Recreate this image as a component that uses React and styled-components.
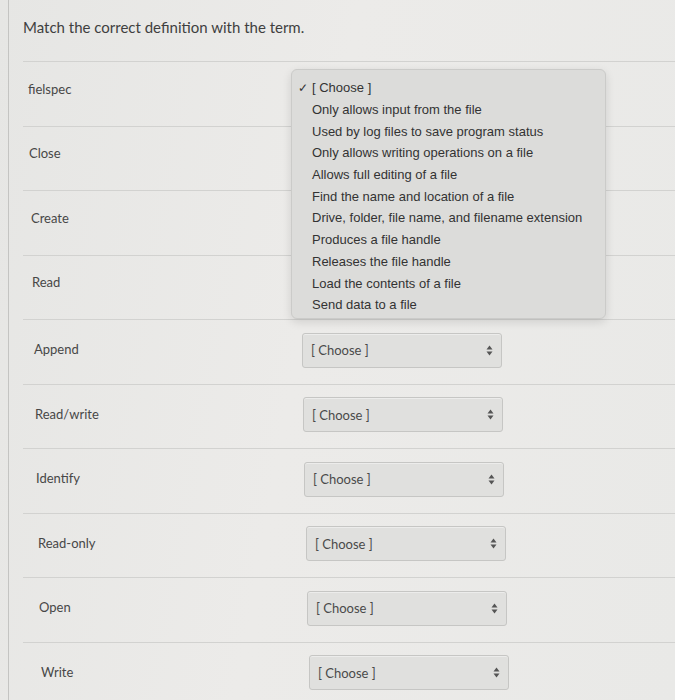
import React from "react";
import styled, { createGlobalStyle } from "styled-components";

const GlobalStyle = createGlobalStyle`
  html, body {
    margin: 0;
    padding: 0;
    background: #e8e8e6;
  }
  body {
    font-family: Lato, "Open Sans", sans-serif;
    color: #474747;
  }
`;

const Page = styled.div`
  position: relative;
  width: 675px;
  height: 700px;
  overflow: hidden;
  background: linear-gradient(100deg, #e6e6e4 0%, #ecebe9 45%, #e9e9e7 100%);
`;

const Question = styled.div`
  margin-left: 8px;
  border-left: 1px solid #c4c4c2;
  height: 100%;
  padding-left: 14px;
  box-sizing: border-box;
`;

const Title = styled.div`
  padding-top: 18px;
  height: 61px;
  box-sizing: border-box;
  font-size: 15px;
  color: #3f3f3f;
`;

const Rows = styled.div`
  position: relative;
`;

const Row = styled.div`
  display: grid;
  grid-template-columns: 268px 200px;
  align-items: center;
  height: 64.5px;
  border-top: 1px solid #d2d2d0;
  box-sizing: border-box;
  padding-left: ${(p) => p.$indent}px;
`;

const Label = styled.div`
  font-size: 13px;
  color: #474747;
  margin-top: ${(p) => p.$lift}px;
`;

const Select = styled.div`
  display: flex;
  align-items: center;
  justify-content: space-between;
  height: 35px;
  width: 200px;
  box-sizing: border-box;
  padding: 0 8px 0 8px;
  margin-top: -3px;
  background: #e0e0de;
  border: 1px solid #c6c6c4;
  border-radius: 3px;
  box-shadow: inset 0 1px 0 rgba(255, 255, 255, 0.4);
  font-size: 13px;
  color: #4a4a4a;
  visibility: ${(p) => (p.$covered ? "hidden" : "visible")};
`;

const Menu = styled.div`
  position: absolute;
  left: 268px;
  top: 8px;
  width: 315px;
  height: 250px;
  box-sizing: border-box;
  padding: 7px 0 0 0;
  background: #dcdcda;
  border: 1px solid #cbcbc9;
  border-radius: 6px;
  box-shadow: 0 3px 10px rgba(0, 0, 0, 0.12);
  font-family: "Liberation Sans", Arial, sans-serif;
  font-size: 13px;
  color: #333;
`;

const Item = styled.div`
  display: flex;
  align-items: center;
  height: 21.7px;
  padding-left: 6px;
`;

const Check = styled.span`
  width: 14px;
  font-size: 12px;
  color: #333;
`;

const Arrows = () => (
  <svg width="7" height="11" viewBox="0 0 7 11">
    <path d="M3.5 0.5 L6.5 4.5 L0.5 4.5 Z" fill="#555" />
    <path d="M3.5 10.5 L6.5 6.5 L0.5 6.5 Z" fill="#555" />
  </svg>
);

const terms = [
  "fielspec",
  "Close",
  "Create",
  "Read",
  "Append",
  "Read/write",
  "Identify",
  "Read-only",
  "Open",
  "Write",
];

const options = [
  "Only allows input from the file",
  "Used by log files to save program status",
  "Only allows writing operations on a file",
  "Allows full editing of a file",
  "Find the name and location of a file",
  "Drive, folder, file name, and filename extension",
  "Produces a file handle",
  "Releases the file handle",
  "Load the contents of a file",
  "Send data to a file",
];

export default function App() {
  return (
    <>
      <GlobalStyle />
      <Page>
        <Question>
          <Title>Match the correct definition with the term.</Title>
          <Rows>
            {terms.map((t, i) => (
              <Row key={t} $indent={5 + Math.round(i * 1.4)}>
                <Label $lift={i < 4 ? -10 : -5}>{t}</Label>
                <Select $covered={i < 4}>
                  [ Choose ]
                  <Arrows />
                </Select>
              </Row>
            ))}
            <Menu>
              <Item>
                <Check>✓</Check>[ Choose ]
              </Item>
              {options.map((o) => (
                <Item key={o}>
                  <Check />
                  {o}
                </Item>
              ))}
            </Menu>
          </Rows>
        </Question>
      </Page>
    </>
  );
}
